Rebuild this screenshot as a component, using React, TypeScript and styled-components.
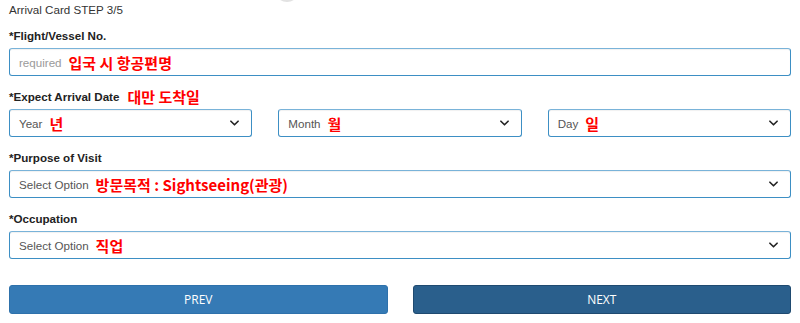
import React from "react";
import styled, { createGlobalStyle } from "styled-components";

const GlobalStyle = createGlobalStyle`
  html, body {
    margin: 0;
    padding: 0;
    background: #fff;
  }
  body {
    font-family: "Liberation Sans", Arial, sans-serif;
    color: #333;
  }
  * {
    box-sizing: border-box;
  }
`;

type FieldProps = {
  label: string;
  note?: string;
  children: React.ReactNode;
};

const Chevron = () => (
  <ChevronIcon viewBox="0 0 10 6" aria-hidden="true">
    <path d="M1 1l4 4 4-4" fill="none" stroke="#222" strokeWidth="1.8" strokeLinecap="round" strokeLinejoin="round" />
  </ChevronIcon>
);

const Field = ({ label, note, children }: FieldProps) => (
  <Group>
    <Label>
      *{label}
      {note && <LabelNote>{note}</LabelNote>}
    </Label>
    {children}
  </Group>
);

const SelectBox = ({ text, note }: { text: string; note: string }) => (
  <Box>
    <BoxText>{text}</BoxText>
    <Note>{note}</Note>
    <Chevron />
  </Box>
);

const App = () => {
  return (
    <Page>
      <GlobalStyle />
      <TopArc />
      <Title>Arrival Card STEP 3/5</Title>
      <Field label="Flight/Vessel No.">
        <Box>
          <Placeholder>required</Placeholder>
          <Note>입국 시 항공편명</Note>
        </Box>
      </Field>
      <Field label="Expect Arrival Date" note="대만 도착일">
        <DateRow>
          <SelectBox text="Year" note="년" />
          <SelectBox text="Month" note="월" />
          <SelectBox text="Day" note="일" />
        </DateRow>
      </Field>
      <Field label="Purpose of Visit">
        <SelectBox text="Select Option" note="방문목적 : Sightseeing(관광)" />
      </Field>
      <Field label="Occupation">
        <SelectBox text="Select Option" note="직업" />
      </Field>
      <Buttons>
        <NavButton>PREV</NavButton>
        <NavButton $primary>NEXT</NavButton>
      </Buttons>
    </Page>
  );
};

const Page = styled.div`
  position: relative;
  width: 800px;
  height: 323px;
  padding: 3px 9px 0;
  overflow: hidden;
`;

const TopArc = styled.div`
  position: absolute;
  left: 275px;
  top: -21px;
  width: 24px;
  height: 23px;
  border-radius: 50%;
  border-bottom: 2px solid #e2e2e2;
`;

const Title = styled.div`
  font-size: 11.6px;
  line-height: 14px;
  color: #333;
  margin-bottom: 10px;
`;

const Group = styled.div`
  margin-bottom: 12px;
`;

const Label = styled.div`
  display: flex;
  align-items: center;
  height: 16px;
  margin-bottom: 5px;
  font-size: 11.6px;
  font-weight: bold;
  color: #222;
`;

const LabelNote = styled.span`
  margin-left: 8px;
  font-family: "Noto Sans CJK KR", "Noto Sans", sans-serif;
  font-size: 15px;
  font-weight: bold;
  color: #ff0000;
`;

const Box = styled.div`
  display: flex;
  align-items: center;
  height: 28px;
  padding: 0 10px 0 9px;
  border: 1px solid #3d8fc4;
  border-top-color: #79b3d9;
  border-radius: 3px;
  background: #fff;
  box-shadow: inset 0 1px 1px rgba(0, 0, 0, 0.06);
`;

const Placeholder = styled.span`
  font-size: 11.6px;
  color: #9a9a9a;
`;

const BoxText = styled.span`
  font-size: 11.6px;
  color: #555;
`;

const Note = styled.span`
  margin-left: 7px;
  font-family: "Noto Sans CJK KR", "Noto Sans", sans-serif;
  font-size: 15px;
  font-weight: bold;
  color: #ff0000;
  white-space: nowrap;
`;

const ChevronIcon = styled.svg`
  width: 9px;
  height: 6px;
  margin-left: auto;
  margin-right: 2px;
`;

const DateRow = styled.div`
  display: grid;
  grid-template-columns: repeat(3, 1fr);
  column-gap: 26px;
`;

const Buttons = styled.div`
  display: grid;
  grid-template-columns: 1fr 1fr;
  column-gap: 25px;
  margin-top: 26px;
`;

const NavButton = styled.button<{ $primary?: boolean }>`
  height: 29px;
  border: 1px solid ${(p) => (p.$primary ? "#1f4a70" : "#2e71ab")};
  border-radius: 3px;
  background: ${(p) => (p.$primary ? "#2a5f8c" : "#357ab5")};
  color: #fff;
  font-family: "Open Sans", "Liberation Sans", sans-serif;
  font-size: 12px;
  cursor: pointer;
`;

export default App;
